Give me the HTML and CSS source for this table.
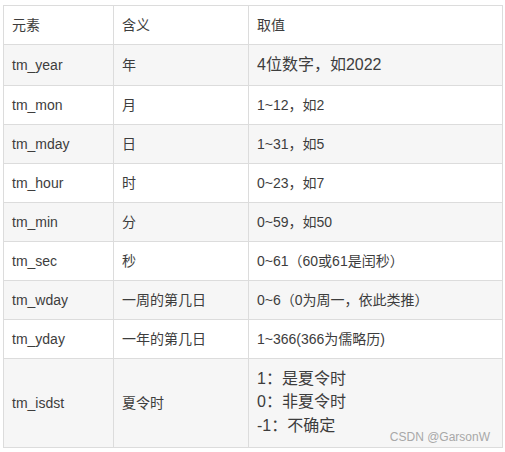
FILE: index.html
```html
<!DOCTYPE html>
<html lang="zh">
<head>
<meta charset="utf-8">
<link rel="stylesheet" href="styles.css">
</head>
<body>
<div class="wrap">
<table class="tbl">
  <colgroup><col class="c1"><col class="c2"><col class="c3"></colgroup>
  <tr class="head"><td>元素</td><td>含义</td><td>取值</td></tr>
  <tr class="alt big"><td>tm_year</td><td>年</td><td class="lg">4位数字，如2022</td></tr>
  <tr><td>tm_mon</td><td>月</td><td>1~12，如2</td></tr>
  <tr class="alt"><td>tm_mday</td><td>日</td><td>1~31，如5</td></tr>
  <tr><td>tm_hour</td><td>时</td><td>0~23，如7</td></tr>
  <tr class="alt"><td>tm_min</td><td>分</td><td>0~59，如50</td></tr>
  <tr><td>tm_sec</td><td>秒</td><td>0~61（60或61是闰秒）</td></tr>
  <tr class="alt"><td>tm_wday</td><td>一周的第几日</td><td>0~6（0为周一，依此类推）</td></tr>
  <tr><td>tm_yday</td><td>一年的第几日</td><td>1~366(366为儒略历)</td></tr>
  <tr class="alt last"><td>tm_isdst</td><td>夏令时</td><td class="lg multi">1：是夏令时<br>0：非夏令时<br>-1：不确定</td></tr>
</table>
<div class="mark">CSDN @GarsonW</div>
</div>
</body>
</html>
```
FILE: styles.css
```css
html, body {
  margin: 0;
  padding: 0;
  background: #fff;
}
.wrap {
  position: relative;
  padding: 5px 3px 0 3px;
  width: 499px;
}
.tbl {
  border-collapse: collapse;
  width: 499px;
  table-layout: fixed;
  font-family: "Liberation Sans", "Noto Sans CJK SC", sans-serif;
  font-size: 14px;
  color: #3d3d3d;
}
.c1 { width: 110px; }
.c2 { width: 135px; }
.c3 { width: 254px; }
.tbl td {
  border: 1px solid #dcdcdc;
  padding: 0 8px;
  box-sizing: border-box;
  vertical-align: middle;
  line-height: 20px;
  height: 39px;
}
.tbl tr.big td { height: 41px; }
.tbl tr.last td { height: 89px; }
.alt td { background: #f6f6f6; }
.tbl td.lg { font-size: 16px; }
.tbl td.multi { line-height: 23.5px; padding-bottom: 2px; }
.mark {
  position: absolute;
  right: 15px;
  top: 430px;
  font-family: "Liberation Sans", sans-serif;
  font-size: 12px;
  color: #a8a8a8;
}
```
